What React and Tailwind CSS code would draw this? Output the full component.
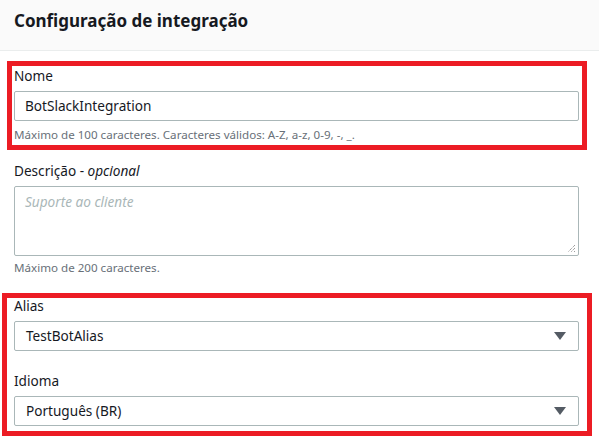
import React from "react";

const font = { fontFamily: '"Noto Sans", "Open Sans", Arial, sans-serif' };

function Arrow() {
  return (
    <svg width="12" height="8" viewBox="0 0 12 8" className="shrink-0">
      <path d="M0 0 H12 L6 8 Z" fill="#545b64" />
    </svg>
  );
}

function Select({ value }) {
  return (
    <div className="flex h-[30px] items-center justify-between rounded-[2px] border border-[#aab7b8] bg-white pl-[11px] pr-[12px] text-[13.6px] text-[#16191f]">
      <span>{value}</span>
      <Arrow />
    </div>
  );
}

export default function App() {
  return (
    <div className="relative h-[439px] w-[599px] overflow-hidden bg-white" style={font}>
      <div className="flex h-[51px] items-center border-b border-[#eaeded] bg-[#fafafa] px-[14px] pb-[8px]">
        <h1 className="text-[17px] font-bold leading-[22px] text-[#16191f]">Configuração de integração</h1>
      </div>

      <div className="flex w-[593px] flex-col px-[14px] pt-[14px]">
        <label className="text-[13.6px] leading-[22px] text-[#16191f]">Nome</label>
        <div className="mt-[4px] flex h-[30px] items-center rounded-[2px] border border-[#aab7b8] bg-white pl-[10px] text-[13.6px] text-[#16191f]">
          BotSlackIntegration
        </div>
        <p className="mt-[5px] text-[11.6px] leading-[18px] text-[#687078]">
          Máximo de 100 caracteres. Caracteres válidos: A-Z, a-z, 0-9, -, _.
        </p>

        <label className="mt-[16px] text-[13.6px] leading-[22px] text-[#16191f]">
          Descrição - <i>opcional</i>
        </label>
        <div className="relative mt-[4px] h-[70px] rounded-[2px] border border-[#aab7b8] bg-white px-[10px] pt-[4px] text-[13.6px] italic leading-[22px] text-[#aab7b8]">
          Suporte ao cliente
          <svg width="9" height="9" viewBox="0 0 9 9" className="absolute bottom-[2px] right-[2px]">
            <path d="M8 1 L1 8 M8 4 L4 8 M8 7 L7 8" stroke="#777" strokeWidth="1" strokeDasharray="1 1" />
          </svg>
        </div>
        <p className="mt-[3px] text-[11.6px] leading-[18px] text-[#687078]">Máximo de 200 caracteres.</p>

        <label className="mt-[18px] text-[13.6px] leading-[22px] text-[#16191f]">Alias</label>
        <div className="mt-[4px]">
          <Select value="TestBotAlias" />
        </div>

        <label className="mt-[19px] text-[13.6px] leading-[22px] text-[#16191f]">Idioma</label>
        <div className="mt-[4px]">
          <Select value="Português (BR)" />
        </div>
      </div>

      <div className="pointer-events-none absolute left-[7px] top-[61px] h-[89px] w-[580px] border-[5px] border-[#ec1c24]" />
      <div className="pointer-events-none absolute left-[2px] top-[293px] h-[143px] w-[590px] border-[5px] border-[#ec1c24]" />
    </div>
  );
}
